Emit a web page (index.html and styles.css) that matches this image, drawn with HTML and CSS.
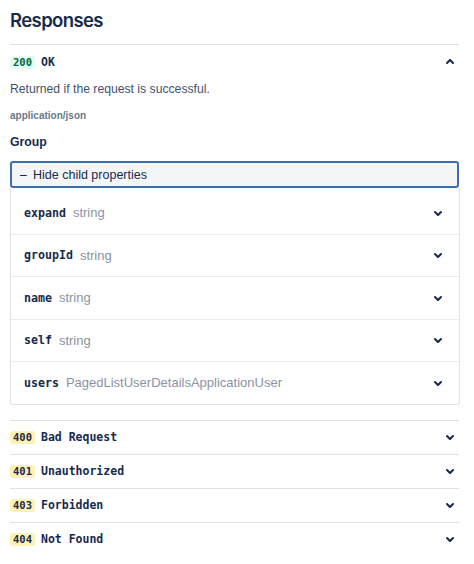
FILE: index.html
```html
<!DOCTYPE html>
<html lang="en">
<head>
<meta charset="utf-8">
<title>Responses</title>
<link rel="stylesheet" href="styles.css">
</head>
<body>
<main class="responses">
  <h2 class="title">Responses</h2>

  <section class="resp resp-open">
    <div class="resp-head">
      <span class="badge badge-ok">200</span>
      <span class="resp-name">OK</span>
      <svg class="chev chev-up" width="24" height="24" viewBox="0 0 24 24"><path d="M8.292 10.293a1.009 1.009 0 000 1.419l2.939 2.965c.218.215.5.322.779.322s.556-.107.769-.322l2.93-2.955a1.01 1.01 0 000-1.419.987.987 0 00-1.406 0l-2.298 2.317-2.307-2.327a.99.99 0 00-1.406 0z"/></svg>
    </div>
    <p class="desc">Returned if the request is successful.</p>
    <div class="media">application/json</div>
    <div class="schema-name">Group</div>
    <button class="toggle" type="button"><span class="toggle-sign">−</span>Hide child properties</button>
    <div class="props">
      <div class="prop">
        <span class="pname">expand</span><span class="ptype">string</span>
        <svg class="chev" width="24" height="24" viewBox="0 0 24 24"><path d="M8.292 10.293a1.009 1.009 0 000 1.419l2.939 2.965c.218.215.5.322.779.322s.556-.107.769-.322l2.93-2.955a1.01 1.01 0 000-1.419.987.987 0 00-1.406 0l-2.298 2.317-2.307-2.327a.99.99 0 00-1.406 0z"/></svg>
      </div>
      <div class="prop">
        <span class="pname">groupId</span><span class="ptype">string</span>
        <svg class="chev" width="24" height="24" viewBox="0 0 24 24"><path d="M8.292 10.293a1.009 1.009 0 000 1.419l2.939 2.965c.218.215.5.322.779.322s.556-.107.769-.322l2.93-2.955a1.01 1.01 0 000-1.419.987.987 0 00-1.406 0l-2.298 2.317-2.307-2.327a.99.99 0 00-1.406 0z"/></svg>
      </div>
      <div class="prop">
        <span class="pname">name</span><span class="ptype">string</span>
        <svg class="chev" width="24" height="24" viewBox="0 0 24 24"><path d="M8.292 10.293a1.009 1.009 0 000 1.419l2.939 2.965c.218.215.5.322.779.322s.556-.107.769-.322l2.93-2.955a1.01 1.01 0 000-1.419.987.987 0 00-1.406 0l-2.298 2.317-2.307-2.327a.99.99 0 00-1.406 0z"/></svg>
      </div>
      <div class="prop">
        <span class="pname">self</span><span class="ptype">string</span>
        <svg class="chev" width="24" height="24" viewBox="0 0 24 24"><path d="M8.292 10.293a1.009 1.009 0 000 1.419l2.939 2.965c.218.215.5.322.779.322s.556-.107.769-.322l2.93-2.955a1.01 1.01 0 000-1.419.987.987 0 00-1.406 0l-2.298 2.317-2.307-2.327a.99.99 0 00-1.406 0z"/></svg>
      </div>
      <div class="prop">
        <span class="pname">users</span><span class="ptype">PagedListUserDetailsApplicationUser</span>
        <svg class="chev" width="24" height="24" viewBox="0 0 24 24"><path d="M8.292 10.293a1.009 1.009 0 000 1.419l2.939 2.965c.218.215.5.322.779.322s.556-.107.769-.322l2.93-2.955a1.01 1.01 0 000-1.419.987.987 0 00-1.406 0l-2.298 2.317-2.307-2.327a.99.99 0 00-1.406 0z"/></svg>
      </div>
    </div>
  </section>

  <div class="resp-list">
    <section class="resp">
      <div class="resp-head">
        <span class="badge badge-warn">400</span>
        <span class="resp-name">Bad Request</span>
        <svg class="chev" width="24" height="24" viewBox="0 0 24 24"><path d="M8.292 10.293a1.009 1.009 0 000 1.419l2.939 2.965c.218.215.5.322.779.322s.556-.107.769-.322l2.93-2.955a1.01 1.01 0 000-1.419.987.987 0 00-1.406 0l-2.298 2.317-2.307-2.327a.99.99 0 00-1.406 0z"/></svg>
      </div>
    </section>
    <section class="resp">
      <div class="resp-head">
        <span class="badge badge-warn">401</span>
        <span class="resp-name">Unauthorized</span>
        <svg class="chev" width="24" height="24" viewBox="0 0 24 24"><path d="M8.292 10.293a1.009 1.009 0 000 1.419l2.939 2.965c.218.215.5.322.779.322s.556-.107.769-.322l2.93-2.955a1.01 1.01 0 000-1.419.987.987 0 00-1.406 0l-2.298 2.317-2.307-2.327a.99.99 0 00-1.406 0z"/></svg>
      </div>
    </section>
    <section class="resp">
      <div class="resp-head">
        <span class="badge badge-warn">403</span>
        <span class="resp-name">Forbidden</span>
        <svg class="chev" width="24" height="24" viewBox="0 0 24 24"><path d="M8.292 10.293a1.009 1.009 0 000 1.419l2.939 2.965c.218.215.5.322.779.322s.556-.107.769-.322l2.93-2.955a1.01 1.01 0 000-1.419.987.987 0 00-1.406 0l-2.298 2.317-2.307-2.327a.99.99 0 00-1.406 0z"/></svg>
      </div>
    </section>
    <section class="resp">
      <div class="resp-head">
        <span class="badge badge-warn">404</span>
        <span class="resp-name">Not Found</span>
        <svg class="chev" width="24" height="24" viewBox="0 0 24 24"><path d="M8.292 10.293a1.009 1.009 0 000 1.419l2.939 2.965c.218.215.5.322.779.322s.556-.107.769-.322l2.93-2.955a1.01 1.01 0 000-1.419.987.987 0 00-1.406 0l-2.298 2.317-2.307-2.327a.99.99 0 00-1.406 0z"/></svg>
      </div>
    </section>
  </div>
</main>
</body>
</html>
```

FILE: styles.css
```css
html, body {
  margin: 0;
  padding: 0;
  background: #ffffff;
}

body {
  font-family: "Liberation Sans", Arial, sans-serif;
  color: #172b4d;
}

.responses {
  width: 449px;
  margin-left: 10px;
}

.title {
  margin: 0;
  padding-top: 8px;
  padding-bottom: 12px;
  font-family: Inter, "Liberation Sans", sans-serif;
  font-size: 18.5px;
  line-height: 24px;
  font-weight: 600;
  letter-spacing: -0.6px;
  color: #172b4d;
}

.resp {
  border-top: 1px solid #dfe1e6;
}

.resp-head {
  display: flex;
  align-items: center;
  height: 33px;
}

.resp-open .resp-head {
  height: 34px;
}

.badge {
  display: inline-flex;
  align-items: center;
  height: 13px;
  padding: 0 3px;
  border-radius: 3px;
  font-family: "DejaVu Sans Mono", monospace;
  font-size: 10.5px;
  font-weight: 700;
}

.badge-ok {
  background: #e3fcef;
  color: #006644;
}

.badge-warn {
  background: #fff0b3;
  color: #172b4d;
}

.resp-name {
  margin-left: 6px;
  flex: 1;
  font-family: "DejaVu Sans Mono", monospace;
  font-size: 11.5px;
  font-weight: 700;
  color: #172b4d;
}

.chev {
  flex: none;
  fill: #172b4d;
}

.resp-head .chev {
  margin-right: -3px;
}

.chev-up {
  transform: rotate(180deg);
}

.desc {
  margin: 1px 0 0;
  font-size: 12.2px;
  line-height: 18px;
  color: #42526e;
}

.media {
  margin-top: 9px;
  font-size: 10px;
  line-height: 18px;
  font-weight: 700;
  color: #6b778c;
}

.schema-name {
  margin-top: 8px;
  font-size: 12.3px;
  line-height: 18px;
  font-weight: 700;
  color: #172b4d;
}

.toggle {
  display: flex;
  align-items: center;
  width: 100%;
  height: 27px;
  margin-top: 10px;
  padding: 0 0 0 7px;
  border: 2px solid #3b6db3;
  border-radius: 3px;
  background: #f4f5f7;
  font-family: "Liberation Sans", Arial, sans-serif;
  font-size: 12.5px;
  color: #172b4d;
  text-align: left;
}

.toggle-sign {
  width: 14px;
  font-size: 14px;
}

.props {
  width: 448px;
  padding-top: 4px;
  border: 1px solid #dfe1e6;
  border-top: none;
  border-radius: 0 0 3px 3px;
}

.prop {
  display: flex;
  align-items: center;
  height: 41.5px;
  padding: 0 9px 0 13px;
}

.prop + .prop {
  border-top: 1px solid #ebecf0;
}

.pname {
  font-family: "DejaVu Sans Mono", monospace;
  font-size: 11.6px;
  font-weight: 700;
  color: #172b4d;
}

.ptype {
  flex: 1;
  margin-left: 7px;
  font-size: 13px;
  color: #8993a4;
}

.resp-list {
  margin-top: 15px;
}
```
